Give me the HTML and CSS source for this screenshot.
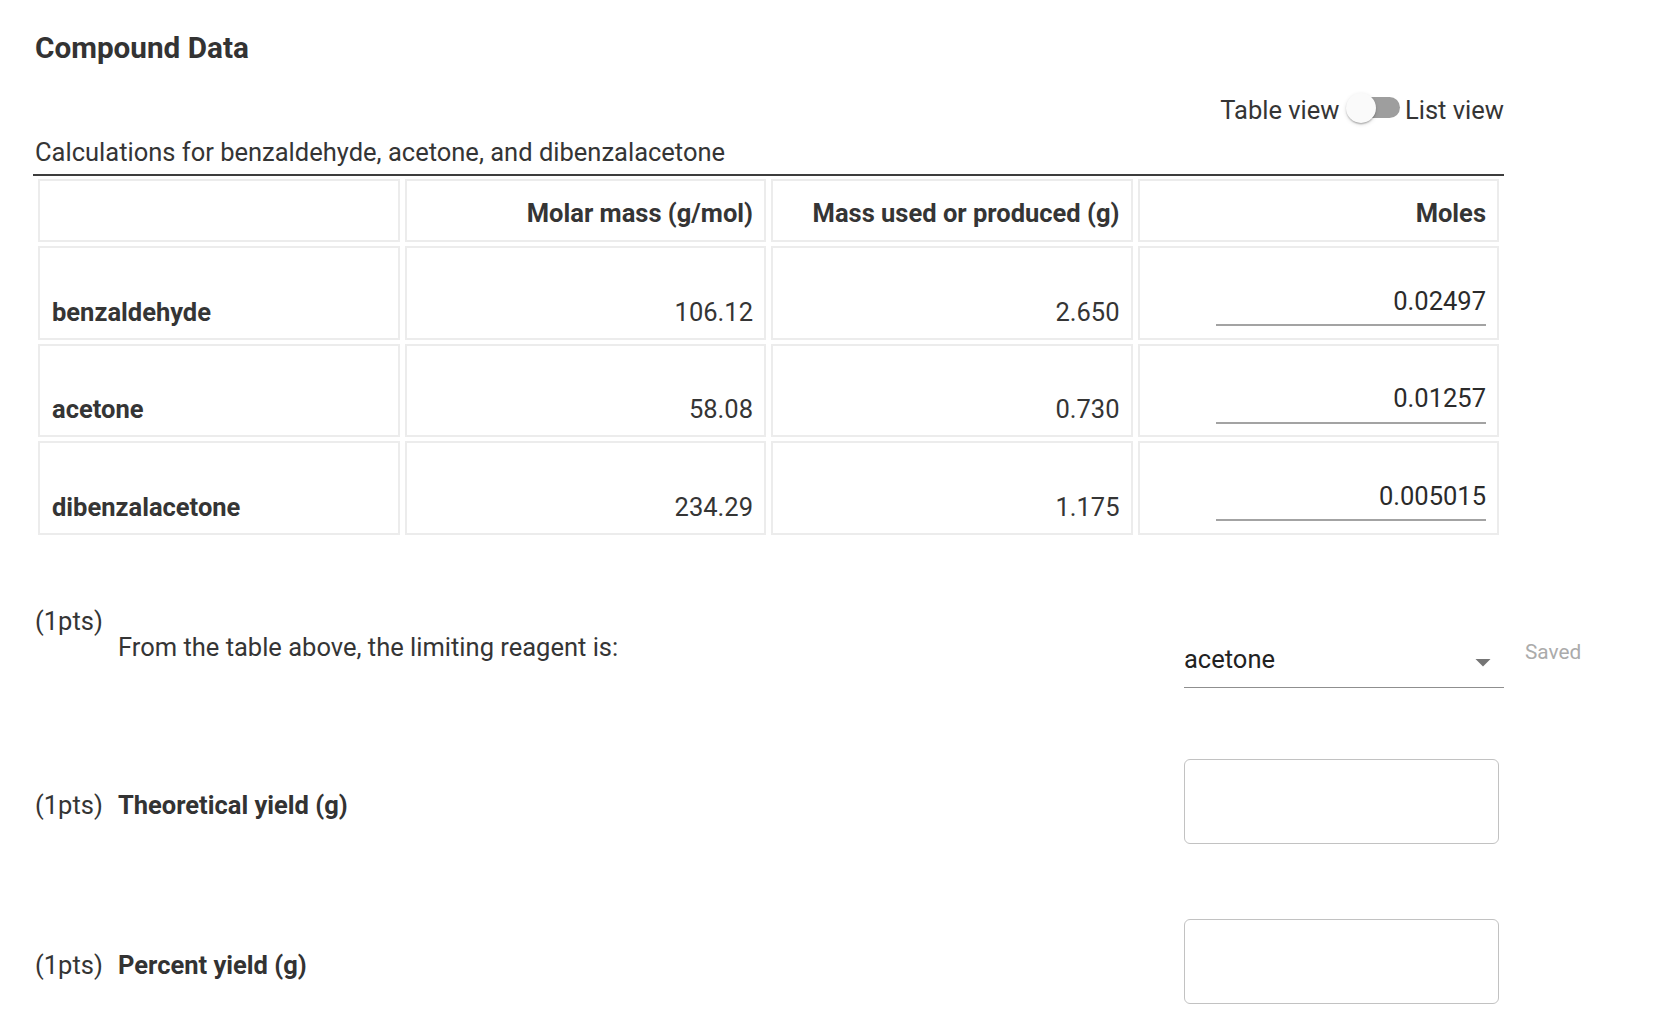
FILE: index.html
```html
<!DOCTYPE html>
<html lang="en">
<head>
<meta charset="utf-8">
<title>Compound Data</title>
<link rel="stylesheet" href="styles.css">
</head>
<body>
<main class="page">
  <h2 class="title">Compound Data</h2>

  <div class="toggle-row">
    <span class="toggle-label">Table view</span>
    <span class="switch"><span class="track"></span><span class="thumb"></span></span>
    <span class="toggle-label toggle-label-right">List view</span>
  </div>

  <div class="caption">Calculations for benzaldehyde, acetone, and dibenzalacetone</div>

  <table class="data">
    <thead>
      <tr>
        <th class="name-col"></th>
        <th>Molar mass (g/mol)</th>
        <th>Mass used or produced (g)</th>
        <th>Moles</th>
      </tr>
    </thead>
    <tbody>
      <tr>
        <td class="name">benzaldehyde</td>
        <td class="num">106.12</td>
        <td class="num">2.650</td>
        <td class="moles"><span class="moles-input">0.02497</span></td>
      </tr>
      <tr>
        <td class="name">acetone</td>
        <td class="num">58.08</td>
        <td class="num">0.730</td>
        <td class="moles"><span class="moles-input">0.01257</span></td>
      </tr>
      <tr>
        <td class="name">dibenzalacetone</td>
        <td class="num">234.29</td>
        <td class="num">1.175</td>
        <td class="moles"><span class="moles-input">0.005015</span></td>
      </tr>
    </tbody>
  </table>

  <section class="qrow qrow-select">
    <div class="pts">(1pts)</div>
    <div class="qtext qtext-plain">From the table above, the limiting reagent is:</div>
    <div class="select">
      <span class="select-value">acetone</span>
      <svg class="select-arrow" viewBox="0 0 24 24" width="36" height="36" aria-hidden="true"><path d="M7 10l5 5 5-5z" fill="#757575"/></svg>
    </div>
    <div class="saved">Saved</div>
  </section>

  <section class="qrow qrow-input qrow-second">
    <div class="pts">(1pts)</div>
    <div class="qtext qtext-bold">Theoretical yield (g)</div>
    <div class="box"></div>
  </section>

  <section class="qrow qrow-input qrow-third">
    <div class="pts">(1pts)</div>
    <div class="qtext qtext-bold">Percent yield (g)</div>
    <div class="box"></div>
  </section>
</main>
</body>
</html>
```

FILE: styles.css
```css
* {
  box-sizing: border-box;
}

html, body {
  margin: 0;
  background: #ffffff;
}

body {
  font-family: Roboto, "Liberation Sans", Arial, sans-serif;
  font-size: 25.5px;
  line-height: 36px;
  color: #353535;
}

.page {
  padding: 25px 0 0 33px;
}

.title {
  margin: 0;
  padding-left: 2px;
  font-size: 29.7px;
  line-height: 45px;
  font-weight: 700;
  color: #333333;
}

.toggle-row {
  width: 1471px;
  margin-top: 22px;
  display: flex;
  justify-content: flex-end;
  align-items: center;
  height: 36px;
}

.toggle-label {
  color: #353535;
}

.switch {
  position: relative;
  width: 54.5px;
  height: 30px;
  margin: 0 5px 5px 6px;
  display: flex;
  align-items: center;
}

.track {
  display: block;
  margin-left: 3.5px;
  width: 51px;
  height: 21px;
  border-radius: 10.5px;
  background: #9e9e9e;
}

.thumb {
  position: absolute;
  left: 0;
  top: 0;
  width: 30px;
  height: 30px;
  border-radius: 50%;
  background: #fafafa;
  box-shadow: 0 1.5px 1.5px -1px rgba(0, 0, 0, 0.2), 0 1.5px 1.5px 0 rgba(0, 0, 0, 0.14), 0 1.5px 4.5px 0 rgba(0, 0, 0, 0.12);
}

.caption {
  width: 1471px;
  margin-top: 6px;
  padding: 0 0 4px 2px;
  border-bottom: 2px solid #3d3d3d;
  color: #353535;
}

.data {
  width: 1471px;
  table-layout: fixed;
  border-collapse: separate;
  border-spacing: 5px 4px;
  margin-top: -1px;
}

.data th,
.data td {
  border: 2px solid #ececec;
  vertical-align: bottom;
  text-align: right;
  color: #353535;
}

.data th {
  padding: 14px 11px 9px 12px;
  font-weight: 700;
  line-height: 36px;
}

.data td {
  padding: 32.5px 11px 8px 12px;
  line-height: 36px;
}

.data td.name {
  text-align: left;
  font-weight: 700;
}

.data td.moles {
  padding-bottom: 11.5px;
}

.moles-input {
  display: inline-block;
  width: 270px;
  padding: 6px 0 9px;
  line-height: 28.5px;
  text-align: right;
  border-bottom: 2px solid #a3a3a3;
  color: #2b2b2b;
  vertical-align: bottom;
}

.qrow {
  margin-left: 2px;
  display: grid;
  grid-template-columns: 83px 1066px 320px auto;
  align-items: start;
}

.qrow-select {
  margin-top: 64px;
}

.qrow-second {
  margin-top: 71px;
}

.qrow-third {
  margin-top: 75px;
}

.pts {
  color: #353535;
  white-space: nowrap;
}

.qtext-plain {
  padding-top: 26px;
  color: #353535;
}

.qrow-input .pts,
.qrow-input .qtext {
  margin-top: 28px;
}

.qtext-bold {
  font-weight: 700;
  color: #333333;
}

.select {
  margin-top: 38px;
  display: flex;
  justify-content: space-between;
  align-items: flex-start;
  padding-bottom: 7px;
  border-bottom: 1px solid #8f8f8f;
}

.select-value {
  color: #222222;
}

.select-arrow {
  display: block;
  margin-top: 3px;
  margin-right: 3px;
}

.saved {
  margin-top: 34px;
  padding-left: 21px;
  font-size: 20.8px;
  line-height: 30px;
  color: #ababab;
}

.box {
  width: 315px;
  height: 85px;
  border: 1px solid #c2c2c2;
  border-radius: 6px;
  background: #ffffff;
}
```
